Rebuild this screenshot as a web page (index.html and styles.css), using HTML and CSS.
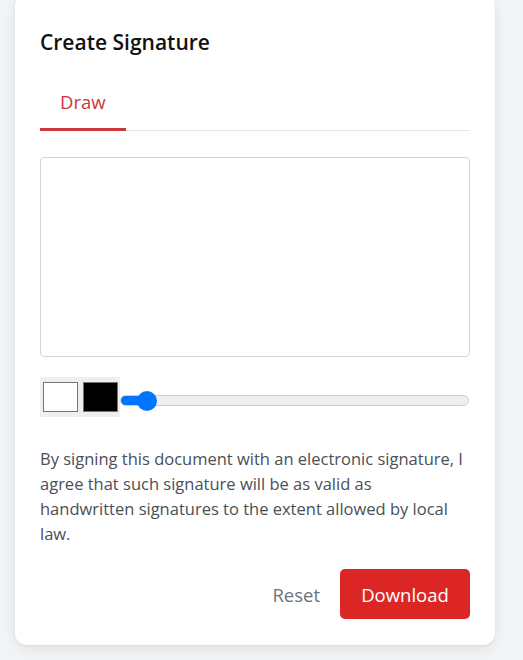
FILE: index.html
```html
<!DOCTYPE html>
<html lang="en">
<head>
<meta charset="utf-8">
<title>Create Signature</title>
<link rel="stylesheet" href="styles.css">
</head>
<body>
<div class="card">
  <h2 class="title">Create Signature</h2>
  <div class="tabs">
    <div class="tab active">Draw</div>
  </div>
  <div class="pad"></div>
  <div class="controls">
    <div class="swatches">
      <div class="swatch white"></div>
      <div class="swatch black"></div>
    </div>
    <div class="slider">
      <div class="track"><div class="fill"></div></div>
      <div class="thumb"></div>
    </div>
  </div>
  <p class="legal">By signing this document with an electronic signature, I agree that such signature will be as valid as handwritten signatures to the extent allowed by local law.</p>
  <div class="actions">
    <button class="btn-reset">Reset</button>
    <button class="btn-download">Download</button>
  </div>
</div>
</body>
</html>
```
FILE: styles.css
```css
html, body {
  margin: 0;
  padding: 0;
}
body {
  background: #f3f4f6;
  font-family: "Open Sans", "Noto Sans", sans-serif;
  height: 660px;
  overflow: hidden;
}
.card {
  box-sizing: border-box;
  width: 480px;
  margin: -6px 0 0 15px;
  padding: 34px 25px 26px;
  background: #ffffff;
  border-radius: 12px;
  box-shadow: 0 4px 14px rgba(0, 0, 0, 0.08), 0 1px 3px rgba(0, 0, 0, 0.05);
}
.title {
  margin: 0;
  font-size: 21px;
  line-height: 28px;
  font-weight: 600;
  color: #111111;
}
.tabs {
  display: flex;
  margin-top: 33px;
  border-bottom: 1px solid #e5e7eb;
}
.tab {
  padding: 0 20px 13px;
  font-size: 18.5px;
  line-height: 26px;
  color: #d13438;
  margin-bottom: -1px;
}
.tab.active {
  border-bottom: 3px solid #c9373b;
}
.pad {
  margin-top: 26px;
  height: 200px;
  box-sizing: border-box;
  border: 1px solid #d4d4d8;
  border-radius: 4px;
}
.controls {
  display: flex;
  align-items: center;
  margin-top: 20px;
  height: 40px;
}
.swatches {
  display: flex;
  gap: 5px;
  padding: 5px 2px 5px 3px;
  background: #efefef;
}
.swatch {
  width: 35px;
  height: 30px;
  box-sizing: border-box;
  border: 1px solid #767676;
}
.swatch.white { background: #ffffff; }
.swatch.black { background: #000000; }
.slider {
  position: relative;
  flex: 1;
  height: 20px;
  margin: 7px 1px 0 0;
  display: flex;
  align-items: center;
}
.track {
  position: relative;
  width: 100%;
  height: 11px;
  box-sizing: border-box;
  border: 1px solid #cfcfcf;
  border-radius: 6px;
  background: #efefef;
  overflow: hidden;
}
.fill {
  position: absolute;
  left: 0;
  top: -1px;
  bottom: -1px;
  width: 27px;
  background: #0075ff;
}
.thumb {
  position: absolute;
  left: 17px;
  top: 0;
  width: 20px;
  height: 20px;
  border-radius: 50%;
  background: #0075ff;
}
.legal {
  margin: 29px 0 0;
  font-size: 16.5px;
  line-height: 25px;
  color: #4b4f56;
}
.actions {
  display: flex;
  justify-content: flex-end;
  align-items: center;
  gap: 20px;
  margin-top: 23px;
}
.btn-reset {
  border: none;
  background: none;
  padding: 0;
  font-family: inherit;
  font-size: 18.5px;
  color: #6c737d;
}
.btn-download {
  border: none;
  width: 130px;
  height: 50px;
  border-radius: 5px;
  background: #dc2626;
  color: #ffffff;
  font-family: inherit;
  font-size: 18.5px;
}
```
